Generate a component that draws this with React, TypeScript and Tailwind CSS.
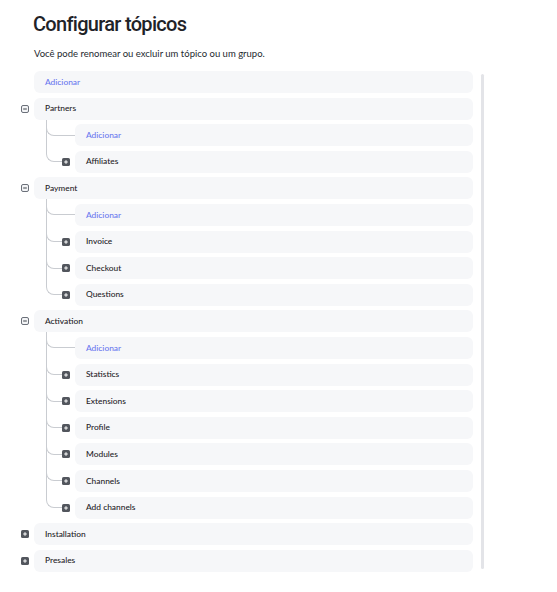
import React from 'react';

type Node = { label: string; add?: boolean; open?: boolean; children?: string[] };

const tree: Node[] = [
  { label: 'Adicionar', add: true },
  { label: 'Partners', open: true, children: ['Affiliates'] },
  { label: 'Payment', open: true, children: ['Invoice', 'Checkout', 'Questions'] },
  {
    label: 'Activation',
    open: true,
    children: ['Statistics', 'Extensions', 'Profile', 'Modules', 'Channels', 'Add channels'],
  },
  { label: 'Installation' },
  { label: 'Presales' },
];

const MinusBox = () => (
  <svg width="8" height="8" viewBox="0 0 8 8" className="block">
    <rect x="0.5" y="0.5" width="7" height="7" rx="1.5" fill="#f3f4f6" stroke="#6b7079" />
    <path d="M2.2 4h3.6" stroke="#3f444b" strokeWidth="1" />
  </svg>
);

const PlusBox = () => (
  <svg width="8" height="8" viewBox="0 0 8 8" className="block">
    <rect x="0" y="0" width="8" height="8" rx="1.6" fill="#52565d" />
    <path d="M2.2 4h3.6M4 2.2v3.6" stroke="#fff" strokeWidth="1" />
  </svg>
);

const Row: React.FC<{ label: string; add?: boolean; icon?: React.ReactNode }> = ({ label, add, icon }) => (
  <div className="flex items-center h-[22px]">
    <div className="w-[17px] pl-[4px] flex items-center">{icon}</div>
    <div
      className={`flex-1 h-full rounded-[6px] bg-[#f6f7f9] pl-[11px] flex items-center text-[8.4px] font-medium ${
        add ? 'text-[#6b78ef]' : 'text-[#1f2328]'
      }`}
    >
      {label}
    </div>
  </div>
);

const Child: React.FC<{ label: string; add?: boolean; last: boolean }> = ({ label, add, last }) => (
  <div className="relative">
    <div
      className={`absolute left-[-12px] top-[-4.6px] h-[16px] border-l border-b border-[#c9ccd1] rounded-bl-[8px] ${
        add ? 'w-[29px]' : 'w-[16px]'
      }`}
    />
    {!last && <div className="absolute left-[-12px] top-[-4.6px] bottom-0 w-px bg-[#c9ccd1]" />}
    <Row label={label} add={add} icon={add ? null : <PlusBox />} />
  </div>
);

export default function App() {
  return (
    <div className="bg-white min-h-[592px] pt-[9px] font-['Lato','Noto_Sans',sans-serif]">
      <h1 className="pl-[33px] text-[20px] tracking-[-0.7px] font-medium font-['Roboto','Lato',sans-serif] text-[#1f2328] leading-[30px]">
        Configurar tópicos
      </h1>
      <p className="pl-[34px] mt-[8px] text-[9.5px] text-[#24292f] leading-[14px]">
        Você pode renomear ou excluir um tópico ou um grupo.
      </p>
      <div className="flex mt-[10px] pl-[17px]">
        <div className="w-[456px] flex flex-col gap-[4.6px]">
          {tree.map((n) => (
            <div key={n.label} className="flex flex-col gap-[4.6px]">
              <Row
                label={n.label}
                add={n.add}
                icon={n.add ? null : n.open ? <MinusBox /> : <PlusBox />}
              />
              {n.open && n.children && (
                <div className="ml-[41px] flex flex-col gap-[4.6px]">
                  <Child label="Adicionar" add last={false} />
                  {n.children.map((c, i) => (
                    <Child key={c} label={c} last={i === n.children!.length - 1} />
                  ))}
                </div>
              )}
            </div>
          ))}
        </div>
        <div className="ml-[8px] my-[3px] w-[3px] rounded-full bg-[#e3e4e8]" />
      </div>
    </div>
  );
}
